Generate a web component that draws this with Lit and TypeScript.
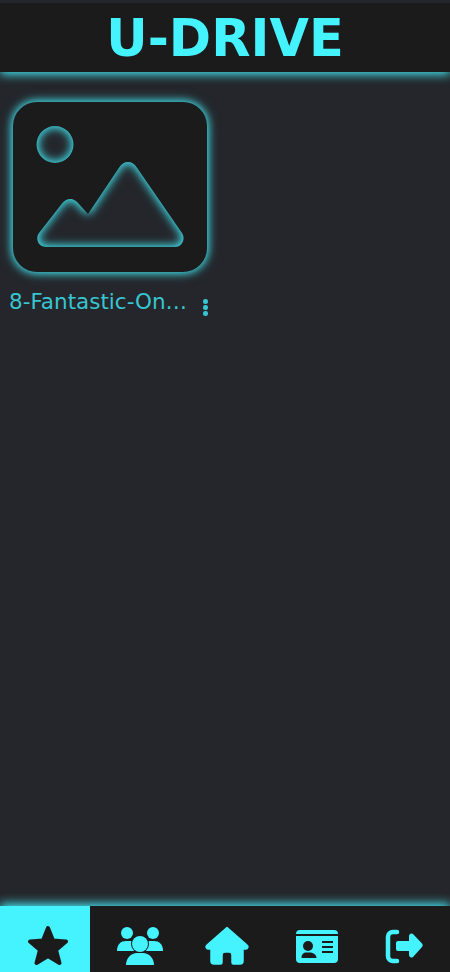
import { LitElement, html, css, svg } from 'lit';
import { customElement, state } from 'lit/decorators.js';

// tab icons, drawn in tab-local coords (90 x 66)
const icons = [
  svg`<polygon points="48,22 53,34.5 66,35.5 56,44 59.5,57 48,50 36.5,57 40,44 30,35.5 43,34.5"
    fill="currentColor" stroke="currentColor" stroke-width="4" stroke-linejoin="round" />`,
  svg`<circle cx="37" cy="27" r="6" fill="currentColor" />
    <circle cx="63" cy="27" r="6" fill="currentColor" />
    <path d="M27 45 C27 38 31 35 36 35 H44 V45 Z" fill="currentColor" />
    <path d="M73 45 C73 38 69 35 64 35 H56 V45 Z" fill="currentColor" />
    <circle cx="50" cy="38" r="8" fill="currentColor" stroke="#1b1b1b" stroke-width="2" paint-order="stroke" />
    <path d="M36 59 C36 52 41 47 47 47 H53 C59 47 64 52 64 59 Z" fill="currentColor" />`,
  svg`<path d="M47 21.5 L67 39 A2.2 2.2 0 0 1 65.5 43 H63 V55 A3 3 0 0 1 60 58 H53.5 A1.5 1.5 0 0 1 52 56.5 V49 A3 3 0 0 0 49 46 H45 A3 3 0 0 0 42 49 V56.5 A1.5 1.5 0 0 1 40.5 58 H34 A3 3 0 0 1 31 55 V43 H28.5 A2.2 2.2 0 0 1 27 39 Z"
    fill="currentColor" stroke="currentColor" stroke-width="1.5" stroke-linejoin="round" />`,
  svg`<path d="M26 28 A4 4 0 0 1 30 24 H64 A4 4 0 0 1 68 28 Z" fill="currentColor" />
    <path fill-rule="evenodd" fill="currentColor" d="M26 30 H68 V53 A4 4 0 0 1 64 57 H30 A4 4 0 0 1 26 53 Z
      M52 35 V37 H63 V35 Z M52 40 V42 H63 V40 Z M52 45 V47 H63 V45 Z" />
    <circle cx="38" cy="40" r="5" fill="#1b1b1b" />
    <path d="M31.500 52 C31.500 48 34 46.500 36 46.500 H40 C42 46.500 46.500 48 46.500 52 Z" fill="#1b1b1b" />`,
  svg`<path d="M37 26 H33 A5 5 0 0 0 28 31 V50 A5 5 0 0 0 33 55 H37" fill="none" stroke="currentColor" stroke-width="4.5" stroke-linecap="round" />
    <path d="M38 35 H49 V30 A2.500 2.500 0 0 1 53 28 L62 37.500 A2.500 2.500 0 0 1 62 41 L53 51 A2.500 2.500 0 0 1 49 49 V45 H38 A2 2 0 0 1 36 43 V37 A2 2 0 0 1 38 35 Z" fill="currentColor" />`,
];

@customElement('file-card')
class FileCard extends LitElement {
  static styles = css`
    :host {
      display: block;
      width: 216px;
    }
    .thumb {
      display: block;
      width: 194px;
      height: 170px;
      margin-left: 13px;
      overflow: visible;
      filter: drop-shadow(0 0 4px rgba(69, 243, 255, 0.7)) drop-shadow(0 0 5px rgba(69, 243, 255, 0.7));
    }
    .meta {
      display: flex;
      align-items: flex-start;
      margin-top: 17px;
      padding-left: 9px;
    }
    .name {
      width: 194px;
      font-size: 21.5px;
      line-height: 25px;
      color: #38c5d1;
      white-space: nowrap;
    }
    .dots {
      display: flex;
      flex-direction: column;
      gap: 1.5px;
      margin-top: 10px;
    }
    .dots span {
      width: 4.5px;
      height: 4.5px;
      border-radius: 50%;
      background: #38c5d1;
    }
  `;

  render() {
    return html`
      <svg class="thumb" viewBox="0 0 194 170">
        <path
          fill="#1b1b1b"
          fill-rule="evenodd"
          d="M24 0 H170 A24 24 0 0 1 194 24 V146 A24 24 0 0 1 170 170 H24 A24 24 0 0 1 0 146 V24 A24 24 0 0 1 24 0 Z
             M42 24 A18.500 18.500 0 1 0 42 61 A18.500 18.500 0 1 0 42 24 Z
             M115 60 C111 60 108.500 62 106.500 65 L75 112 L65 101 C62 97.500 59 97 57 97 C54 97 51.500 98.500 49 101.500 L26 131 C22 136 25 145 33 145 H162 C169 145 173 137 169 131 L123.500 65 C121.500 62 119 60 115 60 Z"
        />
      </svg>
      <div class="meta">
        <div class="name">8-Fantastic-On…</div>
        <div class="dots"><span></span><span></span><span></span></div>
      </div>
    `;
  }
}

@customElement('app-root')
class AppRoot extends LitElement {
  @state() active = 0;

  static styles = css`
    :host {
      display: flex;
      flex-direction: column;
      height: 972px;
      overflow: hidden;
      background: #24262b;
      font-family: 'DejaVu Sans', sans-serif;
    }
    header {
      margin-top: 3px;
      height: 69px;
      padding-top: 2px;
      box-sizing: border-box;
      flex: none;
      display: flex;
      align-items: center;
      justify-content: center;
      background: #1b1b1b;
      color: #45f3ff;
      font-size: 51px;
      font-weight: 700;
      box-shadow: 0 2px 10px #45f3ff;
      clip-path: inset(0 0 -30px 0);
    }
    main {
      flex: 1;
      padding-top: 30px;
    }
    nav {
      flex: none;
      display: flex;
      height: 66px;
      background: #1b1b1b;
      box-shadow: 0 -2px 10px #45f3ff;
    }
    .tab {
      width: 90px;
      height: 66px;
      color: #45f3ff;
    }
    .tab.on {
      background: #45f3ff;
      color: #1b1b1b;
    }
    .tab svg {
      display: block;
    }
  `;

  render() {
    return html`
      <header>U-DRIVE</header>
      <main><file-card></file-card></main>
      <nav>
        ${icons.map(
          (icon, i) => html`
            <div class="tab ${i === this.active ? 'on' : ''}" @click=${() => (this.active = i)}>
              <svg width="90" height="66" viewBox="0 0 90 66">${icon}</svg>
            </div>
          `
        )}
      </nav>
    `;
  }
}
